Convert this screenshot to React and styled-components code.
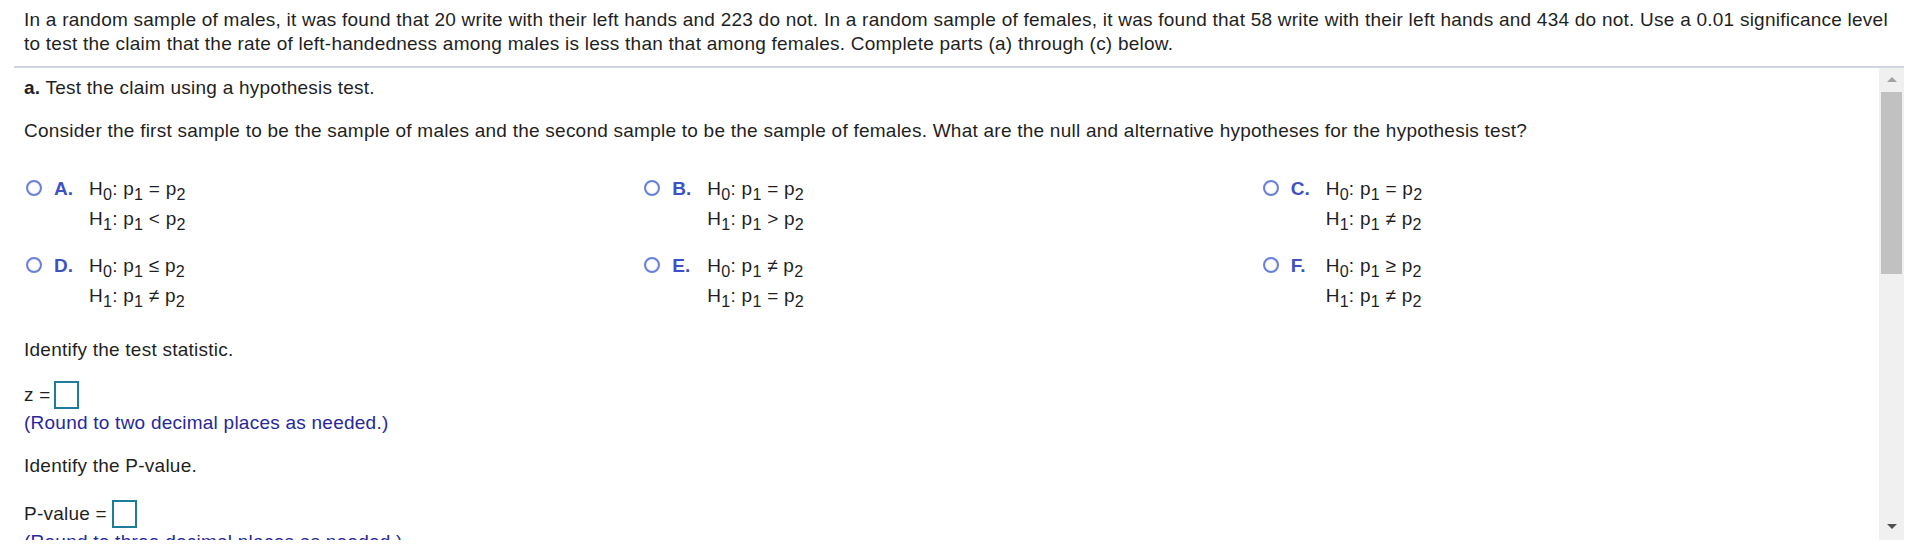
import React from 'react';
import styled, { createGlobalStyle } from 'styled-components';

const GlobalStyle = createGlobalStyle`
  html, body {
    margin: 0;
    padding: 0;
    background: #ffffff;
  }
  body {
    font-family: 'Liberation Sans', Arial, sans-serif;
    color: #1f1f1f;
    letter-spacing: 0.24px;
  }
`;

// Layout
const Page = styled.div`
  width: 1915px;
  height: 548px;
  overflow: hidden;
  display: flex;
  flex-direction: column;
  background: #ffffff;
`;

const Intro = styled.p`
  margin: 0;
  padding: 8px 20px 10px 24px;
  font-size: 19px;
  line-height: 24px;
`;

const Panel = styled.div`
  margin: 0 11px 0 14px;
  height: 472px;
  border-top: 2px solid #cfd4e0;
  display: flex;
`;

const Content = styled.div`
  flex: 1;
  overflow: hidden;
  padding: 8px 0 0 10px;
  font-size: 19px;
  line-height: 24px;
`;

const Paragraph = styled.p`
  margin: ${(p) => p.$top || 0}px 0 0 0;
`;

const Hint = styled.p`
  margin: ${(p) => p.$top || 0}px 0 0 0;
  color: #28289a;
`;

// Options
const OptionGrid = styled.div`
  display: grid;
  grid-template-columns: repeat(3, 1fr);
  row-gap: 17px;
  margin-top: 31px;
`;

const Option = styled.label`
  display: flex;
  align-items: flex-start;
  cursor: pointer;
`;

const Radio = styled.span`
  display: block;
  width: 16px;
  height: 16px;
  box-sizing: border-box;
  margin: 6px 0 0 2px;
  border-radius: 50%;
  border: 2px solid #6a80d8;
  background: radial-gradient(circle, #ffffff 45%, #d9e0f7 100%);
  flex-shrink: 0;
`;

const Letter = styled.span`
  width: 35px;
  margin-left: 12px;
  font-weight: bold;
  color: #3d51c4;
  line-height: 30px;
  letter-spacing: 0;
`;

const Hypotheses = styled.div`
  display: flex;
  flex-direction: column;
  line-height: 30px;
`;

const Sub = styled.span`
  font-size: 0.85em;
  vertical-align: -5px;
  line-height: 0;
`;

// Answer inputs
const AnswerRow = styled.div`
  display: flex;
  align-items: center;
  margin-top: ${(p) => p.$top || 0}px;
`;

const AnswerBox = styled.span`
  display: block;
  width: 25px;
  height: 28px;
  box-sizing: border-box;
  margin-left: ${(p) => p.$gap || 3}px;
  border: 2px solid #1f7b9c;
  background: #ffffff;
`;

// Scrollbar
const ScrollTrack = styled.div`
  width: 25px;
  background: #f0f0f0;
  display: flex;
  flex-direction: column;
  align-items: center;
`;

const Arrow = styled.span`
  width: 0;
  height: 0;
  border-left: 5px solid transparent;
  border-right: 5px solid transparent;
  ${(p) =>
    p.$down
      ? `border-top: 5px solid #505050; margin-bottom: 11px;`
      : `border-bottom: 5px solid #a3a3a3; margin-top: 9px;`}
`;

const Thumb = styled.div`
  width: 21px;
  height: 182px;
  margin-top: 10px;
  background: #c1c1c1;
`;

const Spacer = styled.div`
  flex: 1;
`;

const options = [
  { key: 'A', h0: '=', h1: '<' },
  { key: 'B', h0: '=', h1: '>' },
  { key: 'C', h0: '=', h1: '≠' },
  { key: 'D', h0: '≤', h1: '≠' },
  { key: 'E', h0: '≠', h1: '=' },
  { key: 'F', h0: '≥', h1: '≠' },
];

const Hyp = ({ n, op }) => (
  <span>
    H<Sub>{n}</Sub>: p<Sub>1</Sub> {op} p<Sub>2</Sub>
  </span>
);

const App = () => (
  <Page>
    <GlobalStyle />
    <Intro>
      In a random sample of males, it was found that 20 write with their left hands and 223 do not. In a
      random sample of females, it was found that 58 write with their left hands and 434 do not. Use a 0.01
      significance level to test the claim that the rate of left-handedness among males is less than that
      among females. Complete parts (a) through (c) below.
    </Intro>
    <Panel>
      <Content>
        <Paragraph>
          <b>a.</b> Test the claim using a hypothesis test.
        </Paragraph>
        <Paragraph $top={19}>
          Consider the first sample to be the sample of males and the second sample to be the sample of
          females. What are the null and alternative hypotheses for the hypothesis test?
        </Paragraph>
        <OptionGrid>
          {options.map((o) => (
            <Option key={o.key}>
              <Radio />
              <Letter>{o.key}.</Letter>
              <Hypotheses>
                <Hyp n="0" op={o.h0} />
                <Hyp n="1" op={o.h1} />
              </Hypotheses>
            </Option>
          ))}
        </OptionGrid>
        <Paragraph $top={27}>Identify the test statistic.</Paragraph>
        <AnswerRow $top={19}>
          z =<AnswerBox $gap={3} />
        </AnswerRow>
        <Hint $top={2}>(Round to two decimal places as needed.)</Hint>
        <Paragraph $top={19}>Identify the P-value.</Paragraph>
        <AnswerRow $top={22}>
          P-value =<AnswerBox $gap={5} />
        </AnswerRow>
        <Hint $top={2}>(Round to three decimal places as needed.)</Hint>
      </Content>
      <ScrollTrack>
        <Arrow />
        <Thumb />
        <Spacer />
        <Arrow $down />
      </ScrollTrack>
    </Panel>
  </Page>
);

export default App;
